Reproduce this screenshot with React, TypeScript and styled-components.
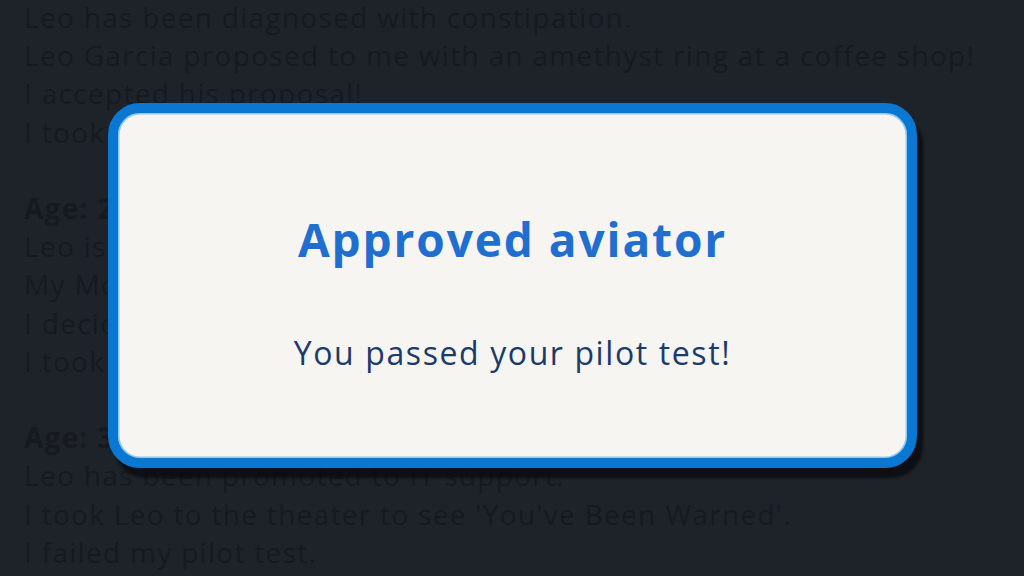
import React from 'react';
import styled, { createGlobalStyle } from 'styled-components';

const GlobalStyle = createGlobalStyle`
    html, body {
        margin: 0;
        padding: 0;
        background: #1e232a;
    }
    body {
        font-family: "Open Sans", Lato, "Noto Sans", sans-serif;
    }
`;

const Screen = styled.div`
    position: relative;
    width: 1024px;
    height: 576px;
    overflow: hidden;
    background: #1e232a;
`;

// life log behind the popup
const Log = styled.div`
    padding: 0 0 0 24px;
    margin-top: -2px;
    font-size: 28px;
    line-height: 38.2px;
    letter-spacing: 1.3px;
    color: #161a1f;
    white-space: nowrap;
`;

interface PropsLine {
    $bold?: boolean;
}
const Line = styled.div<PropsLine>`
    font-weight: ${({ $bold }) => ($bold ? 700 : 400)};
    min-height: 38.2px;
`;

const Dialog = styled.div`
    position: absolute;
    left: 108px;
    top: 103px;
    width: 809px;
    height: 365px;
    box-sizing: border-box;
    border: 10px solid #0a78d2;
    border-radius: 32px;
    background: #f6f5f1;
    box-shadow: inset 0 0 0 1.5px #8ccaf2, 6px 10px 3px rgba(10, 12, 16, 0.85);
    display: flex;
    flex-direction: column;
    align-items: center;
    padding-top: 99px;
`;

const Title = styled.div`
    font-size: 46px;
    line-height: 54px;
    font-weight: 700;
    letter-spacing: 1.9px;
    color: #1f6fd0;
`;

const Message = styled.div`
    margin-top: 68px;
    font-size: 32px;
    line-height: 37px;
    font-weight: 500;
    letter-spacing: 1.6px;
    color: #1c3a6c;
`;

const lines: { text: string; bold?: boolean }[] = [
    { text: 'Leo has been diagnosed with constipation.' },
    { text: 'Leo Garcia proposed to me with an amethyst ring at a coffee shop!' },
    { text: 'I accepted his proposal!' },
    { text: 'I took Leo to the movies.' },
    { text: '' },
    { text: 'Age: 29 years', bold: true },
    { text: 'Leo is now working as an IT technician.' },
    { text: 'My Mother gave me a birthday present.' },
    { text: 'I decided to study for my pilot license.' },
    { text: 'I took Leo out for dinner.' },
    { text: '' },
    { text: 'Age: 30 years', bold: true },
    { text: 'Leo has been promoted to IT support.' },
    { text: "I took Leo to the theater to see 'You've Been Warned'." },
    { text: 'I failed my pilot test.' },
];

export default function App() {
    return (
        <Screen>
            <GlobalStyle />
            <Log>
                {lines.map((l, i) => (
                    <Line key={i} $bold={l.bold}>
                        {l.text}
                    </Line>
                ))}
            </Log>
            <Dialog>
                <Title>Approved aviator</Title>
                <Message>You passed your pilot test!</Message>
            </Dialog>
        </Screen>
    );
}
